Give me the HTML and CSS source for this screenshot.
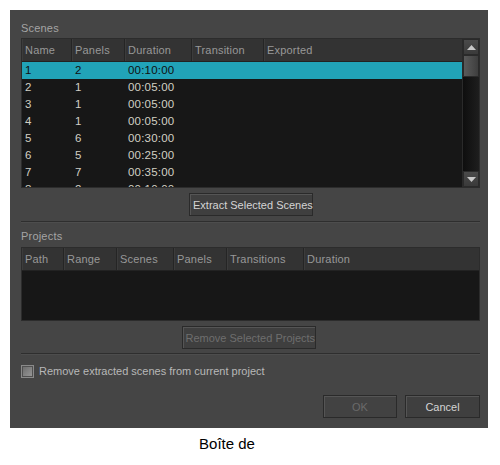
FILE: index.html
```
<!DOCTYPE html>
<html>
<head>
<meta charset="utf-8">
<link rel="stylesheet" href="styles.css">
</head>
<body>
<div class="dialog">
  <div class="group-label">Scenes</div>
  <div class="table scenes">
    <div class="table-main">
      <div class="thead">
        <div class="th c-name">Name</div>
        <div class="th c-panels">Panels</div>
        <div class="th c-dur">Duration</div>
        <div class="th c-trans">Transition</div>
        <div class="th c-exp">Exported</div>
      </div>
      <div class="tbody">
        <div class="tr selected"><div class="td c-name">1</div><div class="td c-panels">2</div><div class="td c-dur">00:10:00</div></div>
        <div class="tr"><div class="td c-name">2</div><div class="td c-panels">1</div><div class="td c-dur">00:05:00</div></div>
        <div class="tr"><div class="td c-name">3</div><div class="td c-panels">1</div><div class="td c-dur">00:05:00</div></div>
        <div class="tr"><div class="td c-name">4</div><div class="td c-panels">1</div><div class="td c-dur">00:05:00</div></div>
        <div class="tr"><div class="td c-name">5</div><div class="td c-panels">6</div><div class="td c-dur">00:30:00</div></div>
        <div class="tr"><div class="td c-name">6</div><div class="td c-panels">5</div><div class="td c-dur">00:25:00</div></div>
        <div class="tr"><div class="td c-name">7</div><div class="td c-panels">7</div><div class="td c-dur">00:35:00</div></div>
        <div class="tr"><div class="td c-name">8</div><div class="td c-panels">2</div><div class="td c-dur">00:10:00</div></div>
      </div>
    </div>
    <div class="scrollbar">
      <div class="sb-btn"><svg width="9" height="5" viewBox="0 0 9 5"><path d="M0 5 L4.5 0 L9 5 Z" fill="#c8c8c8"/></svg></div>
      <div class="sb-thumb"></div>
      <div class="sb-track"></div>
      <div class="sb-btn"><svg width="9" height="5" viewBox="0 0 9 5"><path d="M0 0 L9 0 L4.5 5 Z" fill="#c8c8c8"/></svg></div>
    </div>
  </div>
  <div class="btn-row"><button class="btn btn-extract">Extract Selected Scenes</button></div>
  <div class="sep"></div>
  <div class="group-label projects-label">Projects</div>
  <div class="table projects">
    <div class="table-main">
      <div class="thead">
        <div class="th p-path">Path</div>
        <div class="th p-range">Range</div>
        <div class="th p-scenes">Scenes</div>
        <div class="th p-panels">Panels</div>
        <div class="th p-trans">Transitions</div>
        <div class="th p-dur">Duration</div>
      </div>
      <div class="tbody"></div>
    </div>
  </div>
  <div class="btn-row"><button class="btn btn-remove" disabled>Remove Selected Projects</button></div>
  <div class="sep sep2"></div>
  <label class="check-row"><span class="checkbox"></span><span>Remove extracted scenes from current project</span></label>
  <div class="footer">
    <button class="btn btn-ok" disabled>OK</button>
    <button class="btn btn-cancel">Cancel</button>
  </div>
</div>
<div class="caption">Boîte de</div>
</body>
</html>
```
FILE: styles.css
```
html, body {
  margin: 0;
  padding: 0;
  background: #ffffff;
}
body {
  font-family: "Liberation Sans", Arial, sans-serif;
  font-size: 11px;
}
.dialog {
  margin: 10px 0 0 10px;
  width: 478px;
  height: 418px;
  box-sizing: border-box;
  background: #454545;
  padding: 11px 8px 0 11px;
  display: flex;
  flex-direction: column;
  color: #b4b4b4;
}
.group-label {
  height: 14px;
  line-height: 14px;
  color: #a4a4a4;
  font-size: 11px;
  letter-spacing: 0.2px;
}
.table {
  margin-top: 3px;
  border: 1px solid #2c2c2c;
  display: flex;
  background: #171717;
}
.scenes { height: 148px; }
.projects { height: 72px; }
.table-main {
  flex: 1;
  display: flex;
  flex-direction: column;
  overflow: hidden;
}
.thead {
  display: flex;
  height: 22px;
  flex-shrink: 0;
  background: #333333;
  border-bottom: 1px solid #222;
}
.th {
  box-sizing: border-box;
  padding-left: 3px;
  line-height: 23px;
  color: #989898;
  font-size: 11px;
  letter-spacing: 0.2px;
  border-right: 1px solid #252525;
  box-shadow: inset 1px 0 0 #3c3c3c;
  white-space: nowrap;
}
.c-name { width: 50px; }
.c-panels { width: 53px; }
.c-dur { width: 67px; }
.c-trans { width: 72px; }
.c-exp { flex: 1; border-right: none; }
.p-path { width: 42px; }
.p-range { width: 53px; }
.p-scenes { width: 57px; }
.p-panels { width: 53px; }
.p-trans { width: 77px; }
.p-dur { flex: 1; border-right: none; }
.tbody {
  flex: 1;
  overflow: hidden;
}
.tr {
  display: flex;
  height: 17px;
  line-height: 17px;
}
.td {
  box-sizing: border-box;
  padding-left: 3px;
  color: #d2d0c4;
  font-size: 11.5px;
  letter-spacing: 0.2px;
}
.tr.selected {
  background: #21a3b8;
}
.tr.selected .td { color: #101010; }
.scrollbar {
  width: 16px;
  display: flex;
  flex-direction: column;
  background: #101010;
  border-left: 1px solid #2a2a2a;
}
.sb-btn {
  height: 16px;
  display: flex;
  align-items: center;
  justify-content: center;
  background: linear-gradient(#4a4a4a, #3a3a3a);
  border: 1px solid #2a2a2a;
  box-sizing: border-box;
}
.sb-thumb {
  height: 22px;
  background: linear-gradient(90deg, #5a5a5a, #4a4a4a 60%, #3e3e3e);
  border: 1px solid #2a2a2a;
  box-sizing: border-box;
}
.sb-track {
  flex: 1;
  background: linear-gradient(90deg, #0e0e0e, #1e1e1e);
}
.btn-row {
  display: flex;
  justify-content: center;
  margin-top: 5px;
}
.btn {
  font-family: "Liberation Sans", Arial, sans-serif;
  font-size: 11px;
  letter-spacing: 0;
  white-space: nowrap;
  height: 23px;
  padding: 0 3px;
  background: #3f3f3f;
  color: #d4d4d4;
  border: 1px solid #2a2a2a;
  box-shadow: inset 1px 1px 0 #555;
  margin: 0;
}
.btn-extract { width: 124px; margin-left: 1px; }
.btn-remove { width: 134px; color: #6e6e6e; margin-left: -4px; }
.sep {
  margin-top: 5px;
  height: 1px;
  background: #2e2e2e;
  border-bottom: 1px solid #4d4d4d;
}
.projects-label { margin-top: 6px; height: 15px; }
.sep2 { margin-top: 4px; }
.check-row {
  display: flex;
  align-items: center;
  gap: 5px;
  margin-top: 9px;
  height: 14px;
  color: #b8b8b8;
  font-size: 11px;
  letter-spacing: 0;
}
.checkbox {
  width: 11px;
  height: 11px;
  border: 1px solid #8a8a8a;
  background: linear-gradient(135deg, #6a6a6a, #9a9a9a);
  box-shadow: inset 0 0 0 1px #505050;
}
.footer {
  display: flex;
  justify-content: flex-end;
  gap: 8px;
  margin-top: 17px;
}
.btn-ok { width: 74px; color: #6a6a6a; background: #424242; }
.btn-cancel { width: 75px; }
.caption {
  width: 454px;
  text-align: center;
  margin-top: 7px;
  font-family: "Liberation Sans", Arial, sans-serif;
  font-size: 15px;
  color: #000;
}
```
